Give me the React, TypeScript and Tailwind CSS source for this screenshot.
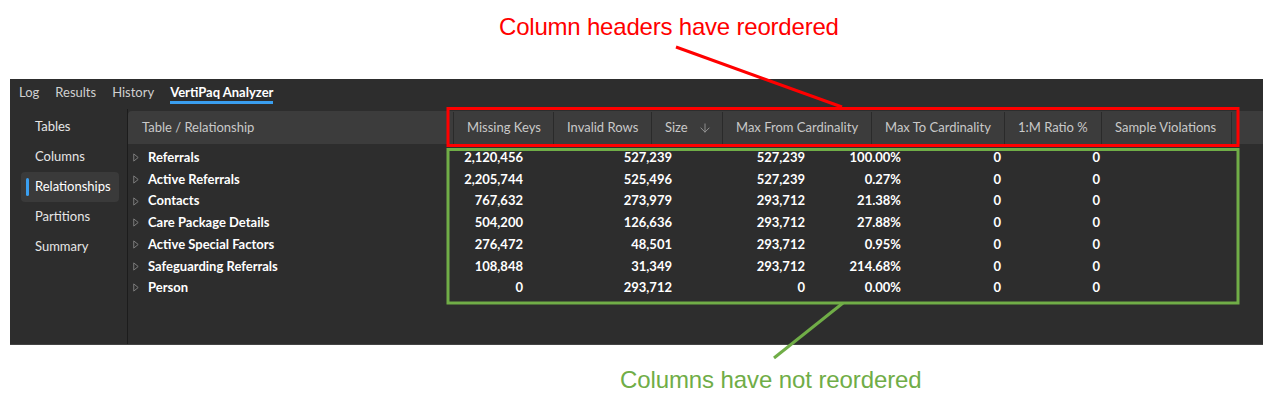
import { ArrowDown } from "lucide-react";

const tabs = ["Log", "Results", "History", "VertiPaq Analyzer"];
const navItems = ["Tables", "Columns", "Relationships", "Partitions", "Summary"];

const headers = [
  { label: "Missing Keys", w: "w-[100px]" },
  { label: "Invalid Rows", w: "w-[98px]" },
  { label: "Size", w: "w-[71px]", sort: true },
  { label: "Max From Cardinality", w: "w-[149px]" },
  { label: "Max To Cardinality", w: "w-[133px]" },
  { label: "1:M Ratio %", w: "w-[97px]" },
  { label: "Sample Violations", w: "w-[130px]" },
];

const colWidths = ["w-[71px]", "w-[149px]", "w-[133px]", "w-[96px]", "w-[100px]", "w-[99px]"];

const rows = [
  ["Referrals", "2,120,456", "527,239", "527,239", "100.00%", "0", "0"],
  ["Active Referrals", "2,205,744", "525,496", "527,239", "0.27%", "0", "0"],
  ["Contacts", "767,632", "273,979", "293,712", "21.38%", "0", "0"],
  ["Care Package Details", "504,200", "126,636", "293,712", "27.88%", "0", "0"],
  ["Active Special Factors", "276,472", "48,501", "293,712", "0.95%", "0", "0"],
  ["Safeguarding Referrals", "108,848", "31,349", "293,712", "214.68%", "0", "0"],
  ["Person", "0", "293,712", "0", "0.00%", "0", "0"],
];

function Expander() {
  return (
    <svg width="6" height="9" viewBox="0 0 6 9" className="shrink-0">
      <path d="M0.75 0.9 L5.2 4.5 L0.75 8.1 Z" fill="none" stroke="#7d7d7d" strokeWidth="1" />
    </svg>
  );
}

export default function App() {
  return (
    <div className="relative w-[1280px] h-[406px] bg-white overflow-hidden font-['Lato',sans-serif]">
      <div className="h-[79px] pl-[499px] pt-[12px]">
        <span className="text-[24px] leading-[30px] text-[#ff0000] font-['Liberation_Sans',sans-serif] tracking-[-0.2px]">
          Column headers have reordered
        </span>
      </div>

      <div className="ml-[10px] w-[1253px] h-[266px] bg-[#2d2d2d] flex flex-col border-b border-[#444]">
        <div className="h-[30px] flex items-start gap-[16px] pl-[9px] pt-[5px] text-[13px] leading-[16px]">
          {tabs.map((t, i) => (
            <div key={t} className="flex flex-col">
              <span className={i === 3 ? "font-bold text-white" : "text-[#d0d0d0]"}>{t}</span>
              {i === 3 && <div className="mt-[1px] h-[3px] bg-[#3a9ff0]" />}
            </div>
          ))}
        </div>

        <div className="flex flex-1 min-h-0">
          <div className="w-[118px] border-r border-[#1c1c1c] pt-[3px] pl-[11px]">
            {navItems.map((n) => {
              const sel = n === "Relationships";
              return (
                <div
                  key={n}
                  className={`w-[98px] h-[30px] flex items-center rounded-[4px] text-[13px] ${
                    sel ? "bg-[#3a3a3a] text-white" : "text-[#e6e6e6]"
                  }`}
                >
                  <div className={`ml-[5px] w-[3px] h-[18px] rounded-sm ${sel ? "bg-[#3a9ff0]" : ""}`} />
                  <span className="ml-[6px]">{n}</span>
                </div>
              );
            })}
          </div>

          <div className="flex-1 pt-[2px] flex flex-col">
            <div className="h-[33px] pt-[1px] flex bg-[#3c3c3c] rounded-tl-[4px] text-[13px] text-[#c9c9c9]">
              <div className="w-[320px] border-r border-[#2a2a2a] flex items-center pl-[14px]">
                Table / Relationship
              </div>
              <div className="w-[6px] border-r border-[#2a2a2a]" />
              {headers.map((h) => (
                <div key={h.label} className={`${h.w} border-r border-[#2a2a2a] flex items-center pl-[13px]`}>
                  <span>{h.label}</span>
                  {h.sort && <ArrowDown size={14} strokeWidth={1.5} className="ml-[10px] text-[#9a9a9a]" />}
                </div>
              ))}
              <div className="flex-1" />
            </div>

            <div className="pt-[3px]">
              {rows.map((r) => (
                <div key={r[0]} className="h-[21.7px] flex items-center text-[13px] font-bold text-white">
                  <div className="w-[324px] flex items-center pl-[5px]">
                    <Expander />
                    <span className="ml-[9px]">{r[0]}</span>
                  </div>
                  {r.slice(1).map((v, i) => (
                    <div key={i} className={`${colWidths[i]} text-right`}>
                      {v}
                    </div>
                  ))}
                </div>
              ))}
            </div>
          </div>
        </div>
      </div>

      <div className="pl-[620px] pt-[20px]">
        <span className="text-[24px] leading-[30px] text-[#70ad47] font-['Liberation_Sans',sans-serif] tracking-[-0.1px]">
          Columns have not reordered
        </span>
      </div>

      <svg className="absolute inset-0 pointer-events-none" width="1280" height="406" viewBox="0 0 1280 406">
        <line x1="676" y1="47" x2="842" y2="107" stroke="#ff0000" strokeWidth="3" />
        <rect x="448" y="108.5" width="790" height="37" fill="none" stroke="#ff0000" strokeWidth="3" />
        <rect x="448" y="149.5" width="790" height="153.5" fill="none" stroke="#70ad47" strokeWidth="3" />
        <line x1="843" y1="303" x2="774" y2="358" stroke="#70ad47" strokeWidth="3" />
      </svg>
    </div>
  );
}
